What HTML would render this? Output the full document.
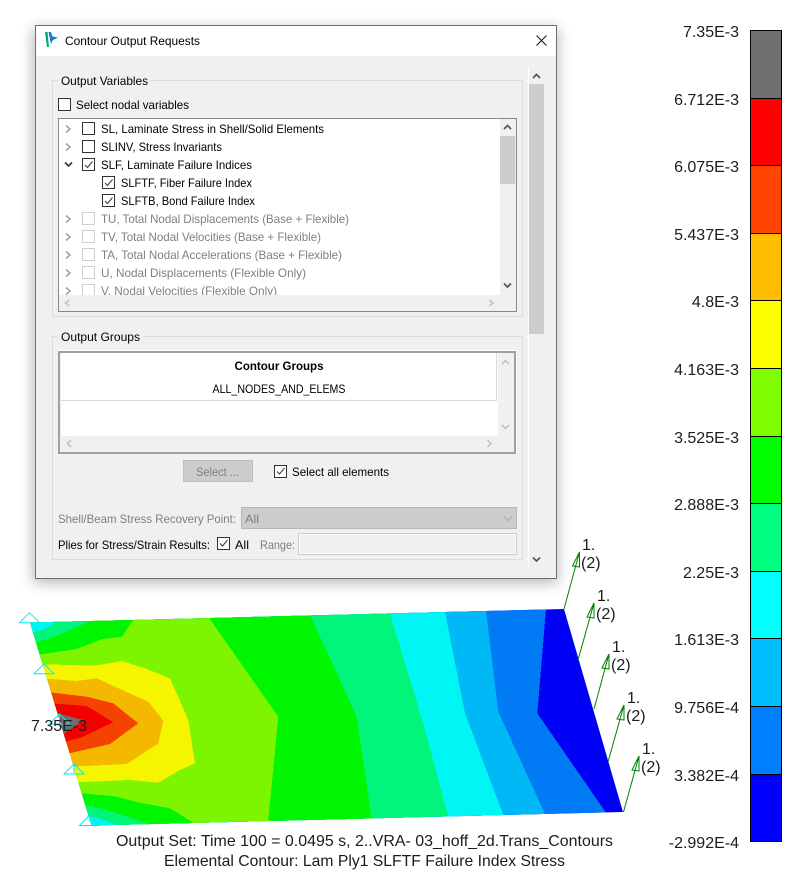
<!DOCTYPE html>
<html><head><meta charset="utf-8"><title>Contour Output Requests</title>
<style>
html,body{margin:0;padding:0;background:#fff;width:790px;height:877px;overflow:hidden}
svg{display:block;position:absolute;left:0;top:0}
text{font-family:"Liberation Sans",sans-serif;font-size:12px;fill:#000;white-space:pre}
.p text,text.p{font-size:16px;fill:#1c1c1c}
.d{fill:#7f7f7f}
.c{shape-rendering:crispEdges}
</style></head><body>
<svg width="790" height="877" viewBox="0 0 790 877" xmlns="http://www.w3.org/2000/svg">
<defs>
<clipPath id="pl"><polygon points="30,622.5 133,620 564,609 623,812 91.5,825.5"/></clipPath>
<clipPath id="tr"><rect x="59" y="119" width="441" height="176"/></clipPath>
<filter id="sh" x="-10%" y="-10%" width="120%" height="120%"><feGaussianBlur stdDeviation="7"/></filter>
</defs>

<!-- legend -->
<g class="c">
<rect x="750" y="30" width="31" height="68" fill="#707070"/>
<rect x="750" y="98" width="31" height="67" fill="#ff0000"/>
<rect x="750" y="165" width="31" height="68" fill="#ff4500"/>
<rect x="750" y="233" width="31" height="67" fill="#ffbf00"/>
<rect x="750" y="300" width="31" height="68" fill="#ffff00"/>
<rect x="750" y="368" width="31" height="68" fill="#80ff00"/>
<rect x="750" y="436" width="31" height="67" fill="#00ff00"/>
<rect x="750" y="503" width="31" height="68" fill="#00ff80"/>
<rect x="750" y="571" width="31" height="67" fill="#00ffff"/>
<rect x="750" y="638" width="31" height="68" fill="#00bfff"/>
<rect x="750" y="706" width="31" height="68" fill="#0080ff"/>
<rect x="750" y="774" width="31" height="67" fill="#0000ff"/>
<path d="M750.5 30.5H781.5V841.5H750.5ZM750 98.5H782M750 165.5H782M750 233.5H782M750 300.5H782M750 368.5H782M750 436.5H782M750 503.5H782M750 571.5H782M750 638.5H782M750 706.5H782M750 774.5H782" fill="none" stroke="#000"/>
</g>
<g class="p" text-anchor="end">
<text x="739" y="37">7.35E-3</text>
<text x="739" y="105">6.712E-3</text>
<text x="739" y="172">6.075E-3</text>
<text x="739" y="240">5.437E-3</text>
<text x="739" y="307">4.8E-3</text>
<text x="739" y="375">4.163E-3</text>
<text x="739" y="443">3.525E-3</text>
<text x="739" y="510">2.888E-3</text>
<text x="739" y="578">2.25E-3</text>
<text x="739" y="645">1.613E-3</text>
<text x="739" y="713">9.756E-4</text>
<text x="739" y="781">3.382E-4</text>
<text x="739" y="848">-2.992E-4</text>
</g>

<!-- contour plot -->
<g clip-path="url(#pl)" class="c">
<rect x="0" y="600" width="650" height="240" fill="#0000f5"/>
<polygon fill="#007af5" points="0,600 546,600 546,609 537.3,713.3 606,812.7 606,830 0,830"/>
<polygon fill="#00b8f5" points="0,600 486,600 486,611 498.3,711.7 545,814 545,830 0,830"/>
<polygon fill="#00f5f5" points="0,600 445,600 445,612.3 465,713.3 503.3,815 503.3,830 0,830"/>
<polygon fill="#00f57a" points="0,600 390,600 390,613.3 423.3,723.3 448.3,816.7 448.3,830 0,830"/>
<polygon fill="#00f500" points="0,600 310,600 310,615 356.7,716.7 371.7,818.3 371.7,830 0,830"/>
<polygon fill="#7df500" points="0,600 209.3,600 209.3,618.3 278.3,716.7 268.3,820 268.3,830 0,830"/>
<polygon fill="#00f500" points="20,610 133.3,610 133.3,620 121.7,636.7 101.7,639.3 76.7,649 30,656"/>
<polygon fill="#00f57a" points="20,610 89,610 89,621.7 70,630 55,636.7 35.7,642.3 20,644"/>
<polygon fill="#00f5f5" points="20,610 55,610 55,622.3 48.3,627.7 33.3,632.3 20,634"/>
<polygon fill="#00f500" points="70,793.3 80,793.3 113.3,796 140,802.7 170,808.3 193.3,822.7 193.3,830 70,830"/>
<polygon fill="#00f57a" points="70,805 84.3,805 103.3,809 125,816 148.3,823.3 148.3,830 70,830"/>
<polygon fill="#00f5f5" points="80,815 87.3,815 103.3,820 115,824.3 115,830 80,830"/>
<polygon fill="#f5f500" points="30,664 43.3,664.3 95,665.7 121.7,661 145,668.3 170,678.3 188.3,720 195,763.3 180,770 158.3,782.7 130,780 108.3,781 76.7,782.3 60,782"/>
<polygon fill="#f5b800" points="30,677.3 76.7,681 96.7,678.3 133.3,695 148.3,701.7 163.3,720.7 158.3,743.3 126.7,764 50,767.7"/>
<polygon fill="#f54200" points="30,690 86.7,696.7 113.3,703.3 138.3,723.3 110,744 50,757.7"/>
<polygon fill="#f50000" points="30,701.7 86.7,706 113.3,722.3 81.7,737.3 50,746"/>
<polygon fill="#6e6e6e" points="40,713.3 56.7,713.3 83.3,720 63.3,734.3 50,734.3"/>
</g>

<!-- constraints -->
<g fill="none" stroke="#00eeee" stroke-width="1">
<path d="M29.5 612.7L19.5 622.7H39.5Z"/>
<path d="M44 664L34 673.7H54Z"/>
<path d="M59.5 714L49.5 724H69.5ZM59.5 714V724"/>
<path d="M74 764L64 774H84ZM74 764V774"/>
<path d="M89.5 815L79.5 825.5H99.5ZM89.5 815L99 825"/>
</g>
<!-- load arrows -->
<g fill="none" stroke="#008000" stroke-width="1">
<path d="M564 609L579.5 552M572.5 566L579.5 552V567Z"/>
<path d="M578 660L594 603M587 617L594 603V618Z"/>
<path d="M594 709L609 654M602 668L609 654V669Z"/>
<path d="M608 762L624 705M617 719L624 705V720Z"/>
<path d="M623.5 812L639 756M632 770L639 756V771Z"/>
</g>
<g class="p">
<text x="582" y="550">1.</text><text x="581" y="568">(2)</text>
<text x="597" y="601">1.</text><text x="596" y="619">(2)</text>
<text x="612" y="652">1.</text><text x="611" y="670">(2)</text>
<text x="627" y="703">1.</text><text x="626" y="721">(2)</text>
<text x="642" y="754">1.</text><text x="641" y="772">(2)</text>
<text x="31" y="731">7.35E-3</text>
<text x="116" y="846" textLength="497" lengthAdjust="spacingAndGlyphs">Output Set: Time 100 = 0.0495 s, 2..VRA- 03_hoff_2d.Trans_Contours</text>
<text x="164" y="866" textLength="401" lengthAdjust="spacingAndGlyphs">Elemental Contour: Lam Ply1 SLFTF Failure Index Stress</text>
</g>

<!-- dialog -->
<rect x="33" y="28" width="525" height="555" fill="#000" opacity=".28" filter="url(#sh)"/>
<g class="c">
<rect x="35.5" y="25.5" width="521" height="553" fill="#f0f0f0" stroke="#6f6f6f"/>
<rect x="36" y="26" width="520" height="30" fill="#fff"/>
</g>
<polygon points="45,32 47.5,32 49,47 47,47" fill="#00a878"/>
<polygon points="48.5,32 51,32 52.5,36.5 58,37.5 53,40 51,44" fill="#1a78d0"/>
<text x="65" y="45" textLength="135" lengthAdjust="spacingAndGlyphs">Contour Output Requests</text>
<path d="M536.5 35.5L546.5 45.5M546.5 35.5L536.5 45.5" stroke="#111" stroke-width="1" fill="none"/>

<!-- outer scrollbar -->
<g class="c">
<rect x="528" y="67" width="1" height="500" fill="#fff"/>
<rect x="529" y="84" width="15" height="250" fill="#cdcdcd"/>
</g>
<g fill="none" stroke="#555" stroke-width="1.7">
<path d="M533 78L536.5 74.5L540 78"/>
<path d="M533 557.5L536.5 561L540 557.5"/>
</g>

<!-- Output Variables group -->
<g class="c" fill="none" stroke="#dcdcdc">
<rect x="52.5" y="80.5" width="470" height="236"/>
<rect x="52.5" y="336.5" width="470" height="223"/>
</g>
<rect x="58" y="76" width="92" height="10" fill="#f0f0f0"/>
<text x="61" y="85" textLength="87" lengthAdjust="spacingAndGlyphs">Output Variables</text>
<rect x="58" y="332" width="85" height="10" fill="#f0f0f0"/>
<text x="61" y="341" textLength="79" lengthAdjust="spacingAndGlyphs">Output Groups</text>

<rect x="58.5" y="98.5" width="12" height="12" fill="#fff" stroke="#333" class="c"/>
<text x="76" y="109" textLength="113" lengthAdjust="spacingAndGlyphs">Select nodal variables</text>

<!-- tree -->
<g class="c">
<rect x="58.5" y="118.5" width="458" height="193" fill="#f0f0f0" stroke="#828790"/>
<rect x="59" y="119" width="441" height="176" fill="#fff"/>
<rect x="500" y="136" width="15" height="48" fill="#cdcdcd"/>
</g>
<g fill="none" stroke="#555" stroke-width="1.7">
<path d="M504 129L507.5 125.5L511 129"/>
<path d="M504 283.5L507.5 287L511 283.5"/>
</g>
<g fill="none" stroke="#c4c4c4" stroke-width="1.7">
<path d="M69 300L65.5 303L69 306"/>
<path d="M489.5 300L493 303L489.5 306"/>
</g>
<g clip-path="url(#tr)">
<g fill="none" stroke="#a6a6a6" stroke-width="1.6">
<path d="M66 125.5L70 129L66 132.5"/>
<path d="M66 143.5L70 147L66 150.5"/>
<path d="M66 215.5L70 219L66 222.5"/>
<path d="M66 233.5L70 237L66 240.5"/>
<path d="M66 251.5L70 255L66 258.5"/>
<path d="M66 269.5L70 273L66 276.5"/>
<path d="M66 287.5L70 291L66 294.5"/>
</g>
<path d="M65 162.5L68.5 166L72 162.5" fill="none" stroke="#333" stroke-width="1.6"/>
<g class="c" fill="#fff" stroke="#333">
<rect x="82.5" y="122.5" width="12" height="12"/>
<rect x="82.5" y="140.5" width="12" height="12"/>
<rect x="82.5" y="158.5" width="12" height="12"/>
<rect x="102.5" y="176.5" width="12" height="12"/>
<rect x="102.5" y="194.5" width="12" height="12"/>
</g>
<g class="c" fill="#fff" stroke="#cfcfcf">
<rect x="82.5" y="212.5" width="12" height="12"/>
<rect x="82.5" y="230.5" width="12" height="12"/>
<rect x="82.5" y="248.5" width="12" height="12"/>
<rect x="82.5" y="266.5" width="12" height="12"/>
<rect x="82.5" y="284.5" width="12" height="12"/>
</g>
<g fill="none" stroke="#444" stroke-width="1.1">
<path d="M85 165L87.5 167.5L92.5 161.5"/>
<path d="M105 183L107.5 185.5L112.5 179.5"/>
<path d="M105 201L107.5 203.5L112.5 197.5"/>
</g>
<text x="101" y="133" textLength="223" lengthAdjust="spacingAndGlyphs">SL, Laminate Stress in Shell/Solid Elements</text>
<text x="101" y="151" textLength="121" lengthAdjust="spacingAndGlyphs">SLINV, Stress Invariants</text>
<text x="101" y="169" textLength="151" lengthAdjust="spacingAndGlyphs">SLF, Laminate Failure Indices</text>
<text x="121" y="187" textLength="131" lengthAdjust="spacingAndGlyphs">SLFTF, Fiber Failure Index</text>
<text x="121" y="205" textLength="134" lengthAdjust="spacingAndGlyphs">SLFTB, Bond Failure Index</text>
<text class="d" x="101" y="223" textLength="248" lengthAdjust="spacingAndGlyphs">TU, Total Nodal Displacements (Base + Flexible)</text>
<text class="d" x="101" y="241" textLength="220" lengthAdjust="spacingAndGlyphs">TV, Total Nodal Velocities (Base + Flexible)</text>
<text class="d" x="101" y="259" textLength="241" lengthAdjust="spacingAndGlyphs">TA, Total Nodal Accelerations (Base + Flexible)</text>
<text class="d" x="101" y="277" textLength="205" lengthAdjust="spacingAndGlyphs">U, Nodal Displacements (Flexible Only)</text>
<text class="d" x="101" y="295" textLength="176" lengthAdjust="spacingAndGlyphs">V, Nodal Velocities (Flexible Only)</text>
</g>

<!-- groups table -->
<g class="c">
<rect x="58" y="350" width="459" height="104" fill="#fff"/>
<rect x="58" y="351" width="458" height="103" fill="#a0a0a0"/>
<rect x="60" y="353" width="454" height="99" fill="#f0f0f0"/>
<rect x="61" y="353" width="437" height="83" fill="#fff"/>
<rect x="61" y="400" width="436" height="1" fill="#d8d8d8"/>
<rect x="496" y="353" width="1" height="48" fill="#d8d8d8"/>
</g>
<text x="279" y="370" text-anchor="middle" font-weight="bold" textLength="89" lengthAdjust="spacingAndGlyphs">Contour Groups</text>
<text x="279" y="393" text-anchor="middle" textLength="133" lengthAdjust="spacingAndGlyphs">ALL_NODES_AND_ELEMS</text>
<g fill="none" stroke="#c4c4c4" stroke-width="1.7">
<path d="M502 364L505.5 360.5L509 364"/>
<path d="M502 425L505.5 428.5L509 425"/>
<path d="M71 440L67.5 443.5L71 447"/>
<path d="M487.5 440L491 443.5L487.5 447"/>
</g>

<!-- select -->
<rect x="183.5" y="460.5" width="69" height="21" fill="#ccc" stroke="#bfbfbf" class="c"/>
<text class="d" x="196" y="476" textLength="43" lengthAdjust="spacingAndGlyphs">Select ...</text>
<rect x="274.5" y="465.5" width="12" height="12" fill="#fff" stroke="#333" class="c"/>
<path d="M277 471.5L279.5 474L284.5 468" fill="none" stroke="#444" stroke-width="1.1"/>
<text x="292" y="476" textLength="97" lengthAdjust="spacingAndGlyphs">Select all elements</text>

<text class="d" x="58" y="523" textLength="178" lengthAdjust="spacingAndGlyphs">Shell/Beam Stress Recovery Point:</text>
<rect x="241.5" y="507.5" width="275" height="21" fill="#ccc" stroke="#b8b8b8" class="c"/>
<text class="d" x="245" y="523" textLength="14" lengthAdjust="spacingAndGlyphs">All</text>
<path d="M504 516.5L508 520.5L512 516.5" fill="none" stroke="#b0b0b0" stroke-width="1.3"/>

<text x="58" y="549" textLength="152" lengthAdjust="spacingAndGlyphs">Plies for Stress/Strain Results:</text>
<rect x="217.5" y="537.5" width="12" height="12" fill="#fff" stroke="#333" class="c"/>
<path d="M220 543.5L222.5 546L227.5 540" fill="none" stroke="#444" stroke-width="1.1"/>
<text x="235" y="549" textLength="14" lengthAdjust="spacingAndGlyphs">All</text>
<text class="d" x="260" y="549" textLength="35" lengthAdjust="spacingAndGlyphs">Range:</text>
<g class="c" fill="none">
<rect x="298.5" y="533.5" width="218" height="21" stroke="#c8c8c8"/>
<rect x="299.5" y="534.5" width="216" height="19" stroke="#fff"/>
</g>
</svg>
</body></html>
